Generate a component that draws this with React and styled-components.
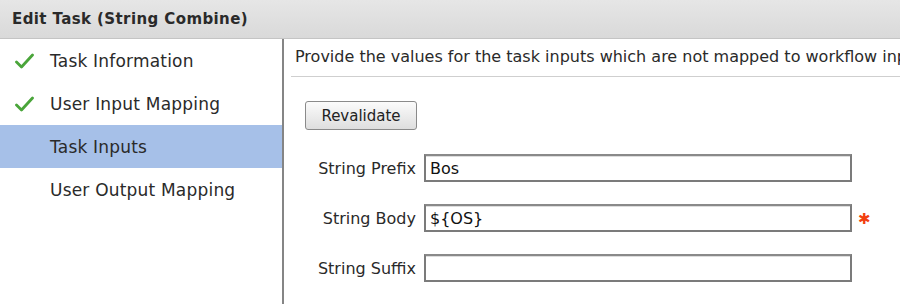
import React from "react";
import styled, { createGlobalStyle } from "styled-components";

const Global = createGlobalStyle`
  html, body { margin: 0; padding: 0; background: #fff; }
  body { font-family: "DejaVu Sans", Verdana, sans-serif; color: #222; }
  * { box-sizing: border-box; }
`;

const Frame = styled.div`
  width: 900px;
  height: 304px;
  overflow: hidden;
  display: flex;
  flex-direction: column;
  background: #fff;
`;

const Header = styled.div`
  height: 39px;
  flex: none;
  display: flex;
  align-items: center;
  padding-left: 12px;
  background: linear-gradient(#e6e6e6, #d9d9d9);
  border-bottom: 1px solid #c4c4c4;
  font-weight: bold;
  font-size: 15px;
  letter-spacing: 0.4px;
  color: #2a2a2a;
  white-space: nowrap;
`;

const Body = styled.div`
  flex: 1;
  display: flex;
  min-height: 0;
`;

const Sidebar = styled.div`
  width: 284px;
  flex: none;
  border-right: 2px solid #858585;
  display: flex;
  flex-direction: column;
`;

const NavItem = styled.div`
  height: 43px;
  display: flex;
  align-items: center;
  padding-left: 15px;
  gap: 16px;
  font-size: 17px;
  letter-spacing: 0.2px;
  color: #2a2a2a;
  white-space: nowrap;
  background: ${(p) => (p.$active ? "#a6c0e8" : "transparent")};
`;

const IconSlot = styled.span`
  width: 19px;
  height: 16px;
  display: inline-flex;
  align-items: center;
`;

const Content = styled.div`
  flex: 1;
  display: flex;
  flex-direction: column;
  padding-left: 7px;
  min-width: 0;
  overflow: hidden;
`;

const Intro = styled.div`
  font-size: 16px;
  line-height: 20px;
  white-space: nowrap;
  padding: 8px 0 9px 4px;
  border-bottom: 1px solid #cfcfcf;
  color: #2a2a2a;
`;

const Form = styled.div`
  padding: 24px 0 0 14px;
  display: flex;
  flex-direction: column;
`;

const Button = styled.button`
  align-self: flex-start;
  height: 29px;
  width: 112px;
  font-family: inherit;
  font-size: 15px;
  color: #222;
  border: 1px solid #8a8a8a;
  border-radius: 3px;
  background: linear-gradient(#fbfbfb, #dedede);
  padding: 0;
  margin-bottom: 24px;
`;

const Rows = styled.div`
  display: grid;
  grid-template-columns: 111px 428px 20px;
  column-gap: 8px;
  row-gap: 22px;
  align-items: center;
`;

const Label = styled.label`
  font-size: 16px;
  text-align: right;
  color: #2a2a2a;
  white-space: nowrap;
`;

const Field = styled.div`
  height: 28px;
  border: 2px solid #7b7b7b;
  border-top-color: #8a8a8a;
  box-shadow: inset 0 1px 0 #ddd;
  display: flex;
  align-items: center;
  padding-left: 4px;
  font-size: 16px;
  color: #111;
`;

const Required = styled.span`
  color: #f2400f;
  font-size: 15px;
  font-weight: bold;
  line-height: 1;
  margin-left: -2px;
`;

const Check = () => (
  <svg width="19" height="16" viewBox="0 0 19 16">
    <path d="M1.5 9 L6.5 14 L17.5 2" fill="none" stroke="#4aa53a" strokeWidth="2.8" strokeLinecap="round" strokeLinejoin="round" />
  </svg>
);

const nav = [
  { label: "Task Information", done: true },
  { label: "User Input Mapping", done: true },
  { label: "Task Inputs", active: true },
  { label: "User Output Mapping" },
];

const fields = [
  { label: "String Prefix", value: "Bos" },
  { label: "String Body", value: "${OS}", required: true },
  { label: "String Suffix", value: "" },
];

export default function App() {
  return (
    <>
      <Global />
      <Frame>
        <Header>Edit Task (String Combine)</Header>
        <Body>
          <Sidebar>
            {nav.map((n) => (
              <NavItem key={n.label} $active={n.active}>
                <IconSlot>{n.done && <Check />}</IconSlot>
                {n.label}
              </NavItem>
            ))}
          </Sidebar>
          <Content>
            <Intro>Provide the values for the task inputs which are not mapped to workflow inputs.</Intro>
            <Form>
              <Button>Revalidate</Button>
              <Rows>
                {fields.map((f) => (
                  <React.Fragment key={f.label}>
                    <Label>{f.label}</Label>
                    <Field>{f.value}</Field>
                    <span>{f.required && <Required>✱</Required>}</span>
                  </React.Fragment>
                ))}
              </Rows>
            </Form>
          </Content>
        </Body>
      </Frame>
    </>
  );
}
